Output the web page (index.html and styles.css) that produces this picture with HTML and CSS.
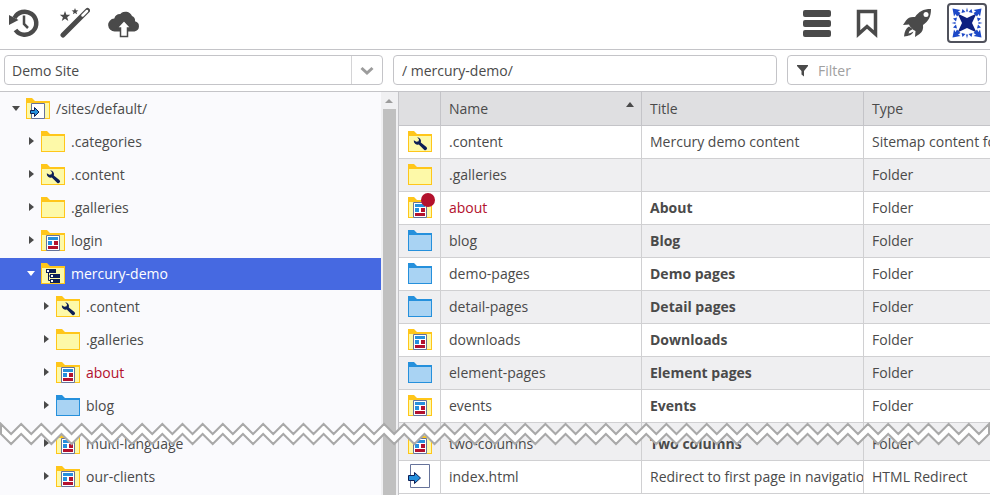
FILE: index.html
```html
<!DOCTYPE html>
<html lang="en">
<head>
    <meta charset="UTF-8">
    <meta name="viewport" content="width=device-width, initial-scale=1.0">
    <title>Explorer</title>
    <link rel="stylesheet" href="styles.css">
</head>
<body>

    <!-- shared icons -->
    <svg class="sprite" aria-hidden="true">
        <g id="base">
            <path d="M0 0h6l3 3h15v18H0z" fill="#ffc61a"/>
            <path d="M1 5h22v15H1z" fill="#fdf9a8"/>
        </g>
        <symbol id="folder" viewBox="0 -1 24 22">
            <use href="#base"/>
        </symbol>
        <symbol id="folder-blue" viewBox="0 -1 24 22">
            <path d="M0 0h6l3 3h15v18H0z" fill="#2590dc"/>
            <path d="M1 5h22v15H1z" fill="#a9d3f3"/>
        </symbol>
        <symbol id="folder-config" viewBox="0 -1 24 22">
            <use href="#base"/>
            <path d="M9.200 6.200a4 4 0 0 1 3.600 5.300l5.600 4.600a1.700 1.700 0 0 1-2.300 2.700l-5.300-5.200a4 4 0 0 1-5-4.400l2.500 1.600 2.300-.500.400-2z" fill="#0d1f56"/>
        </symbol>
        <symbol id="folder-nav" viewBox="0 -1 24 22">
            <use href="#base"/>
            <path d="M5.500 5.500h13v15h-13z" fill="#fff" stroke="#66739a"/>
            <path d="M7 7h10v3H7zM7 11h4v4H7z" fill="#2590dc"/>
            <path d="M13 11h4v4h-4zM7 16h10v3H7z" fill="#b3112d"/>
        </symbol>
        <symbol id="folder-redirect" viewBox="0 -1 24 22">
            <use href="#base"/>
            <path d="M5.500 5.500h13v15h-13z" fill="#fff" stroke="#66739a"/>
            <path d="M4.500 12.500h4v-3l4.500 4.500-4.500 4.500v-3h-4z" fill="#2590dc" stroke="#0d1f56"/>
        </symbol>
        <symbol id="folder-sitemap" viewBox="0 -1 24 22">
            <use href="#base"/>
            <path d="M7.500 9v8.500H10M7.500 13H10" fill="none" stroke="#0d1f56"/>
            <path d="M5 6h10v4H5zM9 11h10v4H9zM9 16h10v4H9z" fill="#0d1f56"/>
            <path d="M6 7h2v2H6zM10 12h2v2h-2zM10 17h2v2h-2z" fill="#fff"/>
        </symbol>
        <symbol id="file-redirect" viewBox="0 0 24 24">
            <path d="M2.500.500h19v23h-19z" fill="#fff" stroke="#66739a"/>
            <path d="M.500 11.500h6v-3l6 5.500-6 5.500v-3h-6z" fill="#2590dc" stroke="#0d1f56"/>
        </symbol>
    </svg>

    <header class="toolbar">
        <button class="tool" aria-label="History">
            <svg width="32" height="32" viewBox="0 0 32 32">
                <path d="M6.500 11A11.500 11.500 0 1 1 7.500 23" fill="none" stroke="#4a4a4a" stroke-width="4.500"/>
                <path d="M1 8v10l9.500-5z" fill="#4a4a4a"/>
                <path d="M16 8.500V17l4 4" fill="none" stroke="#4a4a4a" stroke-width="2.500"/>
            </svg>
        </button>
        <button class="tool" aria-label="Publish wand">
            <svg width="32" height="32" viewBox="0 0 32 32">
                <path d="M5 28L29.500 3.500" fill="none" stroke="#4a4a4a" stroke-width="5" stroke-linecap="round"/>
                <path d="M24.500 8.500l4.500-4.500" stroke="#fff" stroke-width="2.500" stroke-linecap="round"/>
                <path d="M7 4l1.400 3.700 3.900.100-3.100 2.400 1.100 3.800L7 11.800 3.800 14l1.100-3.800-3.100-2.400 3.900-.100zM17 1l.900 2.300 2.500.100-2 1.500.7 2.400L17 5.900l-2.100 1.400.7-2.400-2-1.500 2.500-.1z" fill="#4a4a4a"/>
            </svg>
        </button>
        <button class="tool" aria-label="Upload">
            <svg width="32" height="32" viewBox="0 0 32 32">
                <path d="M7 24.500a6.500 6.500 0 0 1-.700-13 6 6 0 0 1 6-4.500A7 7 0 0 1 24 9a5 5 0 0 1 3 5.300A5.200 5.200 0 0 1 26.500 24.500z" fill="#4a4a4a"/>
                <path d="M16 13.500l7 7.500h-3.500v8.500h-7V21H9z" fill="#fff" stroke="#4a4a4a" stroke-width="1.500"/>
            </svg>
        </button>
        <span class="spacer"></span>
        <button class="tool" aria-label="Menu">
            <svg width="32" height="32" viewBox="0 0 32 32" fill="#4a4a4a">
                <rect x="2" y="3" width="28" height="7" rx="2"/>
                <rect x="2" y="13" width="28" height="7" rx="2"/>
                <rect x="2" y="23" width="28" height="7" rx="2"/>
            </svg>
        </button>
        <button class="tool" aria-label="Bookmark">
            <svg width="32" height="32" viewBox="0 0 32 32">
                <path d="M7.500 4.500h17V27L16 19.500 7.500 27z" fill="none" stroke="#4a4a4a" stroke-width="3.500"/>
            </svg>
        </button>
        <button class="tool" aria-label="Launchpad">
            <svg width="32" height="32" viewBox="0 0 32 32">
                <path d="M30 2c-8 0-12 2.500-16 8-4-.5-7 .500-9 3.500L2 18l6-.500 1 2 3.500 3.500 2 1-.500 6 4.500-3c3-2 4-5 3.500-9 5.500-4 8-8 8-16z" fill="#4a4a4a"/>
                <circle cx="25" cy="7.500" r="2.500" fill="#fff"/>
                <path d="M8 19.500c-3 1.500-4.500 5-5 10 5-.5 8-1.500 9.500-5l-3 1.500-2 .500 1-2.500 3.500-2z" fill="#4a4a4a"/>
            </svg>
        </button>
        <button class="avatar" aria-label="User">
            <svg width="32" height="32" viewBox="0 0 32 32">
                <path d="M6.500 6.500L16 11l9.500-4.500L21 16l4.500 9.500L16 21l-9.500 4.500L11 16z" fill="#0d2080"/>
                <g id="ray" fill="#1c48c8">
                    <path d="M1.500 1.500l8 1.500L7 4.500l2.500 1.500L6 9.500 4.500 7 3 9.500z"/>
                    <path d="M10.500 6l1-4 3 3zM15 4.500L16 .500l1 4zM17.500 5l3-3 1 4z"/>
                </g>
                <use href="#ray" transform="rotate(90 16 16)"/>
                <use href="#ray" transform="rotate(180 16 16)"/>
                <use href="#ray" transform="rotate(270 16 16)"/>
            </svg>
        </button>
    </header>

    <div class="filters">
        <div class="site">
            <select class="field" aria-label="Site">
                <option>Demo Site</option>
            </select>
            <svg class="chevron" width="31" height="28" viewBox="0 0 31 28">
                <path d="M.500 0v28" stroke="#d4d4d6"/>
                <path d="M10.500 12l5.500 5 5.500-5" fill="none" stroke="#9c9c9c" stroke-width="3"/>
            </svg>
        </div>
        <input class="field path" type="text" aria-label="Path" value="/ mercury-demo/">
        <div class="search">
            <svg class="funnel" width="14" height="12" viewBox="0 0 14 12"><path d="M1 0h11v1L8 6v5.500L5.500 9.500V6L1 1z" fill="#4a4a4a"/></svg>
            <input class="field" type="text" aria-label="Filter" placeholder="Filter">
        </div>
    </div>

    <main class="explorer">
        <nav class="tree">
            <ul class="nodes">
                <li class="node open"><button class="toggle" aria-label="Toggle"></button><svg class="icon"><use href="#folder-redirect"/></svg><a href="#">/sites/default/</a></li>
                <li class="node level1"><button class="toggle" aria-label="Toggle"></button><svg class="icon"><use href="#folder"/></svg><a href="#">.categories</a></li>
                <li class="node level1"><button class="toggle" aria-label="Toggle"></button><svg class="icon"><use href="#folder-config"/></svg><a href="#">.content</a></li>
                <li class="node level1"><button class="toggle" aria-label="Toggle"></button><svg class="icon"><use href="#folder"/></svg><a href="#">.galleries</a></li>
                <li class="node level1"><button class="toggle" aria-label="Toggle"></button><svg class="icon"><use href="#folder-nav"/></svg><a href="#">login</a></li>
                <li class="node level1 open selected"><button class="toggle" aria-label="Toggle"></button><svg class="icon"><use href="#folder-sitemap"/></svg><a href="#">mercury-demo</a></li>
                <li class="node level2"><button class="toggle" aria-label="Toggle"></button><svg class="icon"><use href="#folder-config"/></svg><a href="#">.content</a></li>
                <li class="node level2"><button class="toggle" aria-label="Toggle"></button><svg class="icon"><use href="#folder"/></svg><a href="#">.galleries</a></li>
                <li class="node level2 changed"><button class="toggle" aria-label="Toggle"></button><svg class="icon"><use href="#folder-nav"/></svg><a href="#">about</a></li>
                <li class="node level2"><button class="toggle" aria-label="Toggle"></button><svg class="icon"><use href="#folder-blue"/></svg><a href="#">blog</a></li>
                <li class="node level2 after-tear"><button class="toggle" aria-label="Toggle"></button><svg class="icon"><use href="#folder-nav"/></svg><a href="#">multi-language</a></li>
                <li class="node level2"><button class="toggle" aria-label="Toggle"></button><svg class="icon"><use href="#folder-nav"/></svg><a href="#">our-clients</a></li>
            </ul>
            <div class="scrollbar">
                <span class="scroll-up"></span>
                <span class="thumb"></span>
            </div>
        </nav>

        <div class="list">
            <table class="files">
                <colgroup>
                    <col class="col-icon">
                    <col class="col-name">
                    <col class="col-title">
                    <col>
                </colgroup>
                <thead>
                    <tr><th></th><th><span class="sorted">Name</span></th><th>Title</th><th>Type</th></tr>
                </thead>
                <tbody>
                    <tr><td><svg class="icon"><use href="#folder-config"/></svg></td><td>.content</td><td>Mercury demo content</td><td>Sitemap content folder</td></tr>
                    <tr><td><svg class="icon"><use href="#folder"/></svg></td><td>.galleries</td><td></td><td>Folder</td></tr>
                    <tr><td><span class="badged"><svg class="icon"><use href="#folder-nav"/></svg></span></td><td class="changed">about</td><td><b>About</b></td><td>Folder</td></tr>
                    <tr><td><svg class="icon"><use href="#folder-blue"/></svg></td><td>blog</td><td><b>Blog</b></td><td>Folder</td></tr>
                    <tr><td><svg class="icon"><use href="#folder-blue"/></svg></td><td>demo-pages</td><td><b>Demo pages</b></td><td>Folder</td></tr>
                    <tr><td><svg class="icon"><use href="#folder-blue"/></svg></td><td>detail-pages</td><td><b>Detail pages</b></td><td>Folder</td></tr>
                    <tr><td><svg class="icon"><use href="#folder-nav"/></svg></td><td>downloads</td><td><b>Downloads</b></td><td>Folder</td></tr>
                    <tr><td><svg class="icon"><use href="#folder-blue"/></svg></td><td>element-pages</td><td><b>Element pages</b></td><td>Folder</td></tr>
                    <tr><td><svg class="icon"><use href="#folder-nav"/></svg></td><td>events</td><td><b>Events</b></td><td>Folder</td></tr>
                    <tr class="after-tear"><td><svg class="icon"><use href="#folder-nav"/></svg></td><td>two-columns</td><td><b>Two columns</b></td><td>Folder</td></tr>
                    <tr><td><svg class="icon file"><use href="#file-redirect"/></svg></td><td>index.html</td><td>Redirect to first page in navigation</td><td>HTML Redirect</td></tr>
                </tbody>
            </table>
        </div>

        <!-- tear line across both panes -->
        <svg class="tear" viewBox="0 0 982 24" preserveAspectRatio="none" aria-hidden="true">
            <path vector-effect="non-scaling-stroke" fill="#fff" stroke="#a9a9a9" stroke-width="2" d="M1 2l
                10 10 10-10 10 10 10-10 10 10 10-10 10 10 10-10 10 10 10-10 10 10 10-10 10 10 10-10
                10 10 10-10 10 10 10-10 10 10 10-10 10 10 10-10 10 10 10-10 10 10 10-10 10 10 10-10
                10 10 10-10 10 10 10-10 10 10 10-10 10 10 10-10 10 10 10-10 10 10 10-10 10 10 10-10
                10 10 10-10 10 10 10-10 10 10 10-10 10 10 10-10 10 10 10-10 10 10 10-10 10 10 10-10
                10 10 10-10 10 10 10-10 10 10 10-10 10 10 10-10 10 10 10-10 10 10 10-10 10 10 10-10
                10 10 10-10 10 10 10-10 10 10 10-10 10 10 10-10 10 10 10-10 10 10 10-10 10 10 10-10
                10 10 10-10 10 10 10-10 10 10 10-10 10 10 10-10 10 10 10-10 10 10 10-10 10 10 10-10
                v10l
                -10 10-10-10-10 10-10-10-10 10-10-10-10 10-10-10-10 10-10-10-10 10-10-10-10 10-10-10
                -10 10-10-10-10 10-10-10-10 10-10-10-10 10-10-10-10 10-10-10-10 10-10-10-10 10-10-10
                -10 10-10-10-10 10-10-10-10 10-10-10-10 10-10-10-10 10-10-10-10 10-10-10-10 10-10-10
                -10 10-10-10-10 10-10-10-10 10-10-10-10 10-10-10-10 10-10-10-10 10-10-10-10 10-10-10
                -10 10-10-10-10 10-10-10-10 10-10-10-10 10-10-10-10 10-10-10-10 10-10-10-10 10-10-10
                -10 10-10-10-10 10-10-10-10 10-10-10-10 10-10-10-10 10-10-10-10 10-10-10-10 10-10-10
                -10 10-10-10-10 10-10-10-10 10-10-10-10 10-10-10-10 10-10-10-10 10-10-10-10 10-10-10z"/>
        </svg>
    </main>

</body>
</html>
```

FILE: styles.css
```css
* {
    box-sizing: border-box;
}

body {
    margin: 0;
    height: 100vh;
    display: flex;
    flex-direction: column;
    overflow: hidden;
    font-family: "Open Sans", sans-serif;
    font-size: 14px;
    color: #4a4a4a;
    background-color: #fff;
}

button {
    padding: 0;
    border: 0;
    background: none;
}

a {
    color: inherit;
    text-decoration: none;
}

.sprite {
    position: absolute;
    width: 0;
    height: 0;
}

.toolbar {
    display: flex;
    align-items: center;
    gap: 18px;
    height: 50px;
    padding: 0 3px 4px 8px;
    border-bottom: 1px solid #c4c4c8;
    flex: none;
}

.tool,
.tool svg,
.avatar svg {
    display: block;
}

.spacer {
    flex: 1;
}

.avatar {
    display: flex;
    align-items: center;
    justify-content: center;
    width: 40px;
    height: 40px;
    margin-left: -4px;
    border: 2px solid #50525c;
    border-radius: 4px;
}

.filters {
    display: flex;
    gap: 10px;
    padding: 5px 3px 6px 4px;
    border-bottom: 1px solid #c4c4c8;
    flex: none;
}

.field {
    display: block;
    width: 100%;
    height: 30px;
    padding: 0 8px;
    border: 1px solid #c4c4c8;
    border-radius: 4px;
    background-color: #fff;
    font: inherit;
    color: #4a4a4a;
}

.field::placeholder {
    color: #a0a0a0;
}

.site {
    position: relative;
    flex: none;
    width: 379px;
}

.site .field {
    appearance: none;
    padding: 0 7px;
}

.chevron {
    position: absolute;
    top: 1px;
    right: 1px;
    pointer-events: none;
}

.path {
    flex: 1;
    min-width: 0;
}

.search {
    position: relative;
    flex: none;
    width: 200px;
}

.search .field {
    padding-left: 30px;
}

.funnel {
    position: absolute;
    top: 10px;
    left: 9px;
}

.explorer {
    position: relative;
    display: flex;
    flex: 1;
    min-height: 0;
    overflow: hidden;
}

.tree {
    display: flex;
    flex: none;
    width: 399px;
    border-right: 1px solid #c4c4c8;
    background-color: #fafafd;
}

.nodes {
    flex: 1;
    margin: 0;
    padding: 1px 0 0;
    list-style: none;
}

.node {
    display: flex;
    align-items: center;
    height: 32px;
    margin-bottom: 1px;
    padding: 0 0 2px 10px;
}

.node a {
    margin-left: 6px;
}

.level1 {
    padding-left: 25px;
}

.level2 {
    padding-left: 40px;
}

.node.after-tear {
    margin-top: 6px;
}

.selected {
    background-color: #4669e1;
    color: #fff;
}

.toggle {
    display: flex;
    justify-content: center;
    width: 12px;
    margin-right: 4px;
}

.toggle::before {
    content: "";
    border: 4px solid transparent;
    border-left: 5px solid #4a4a4a;
    border-right: 0;
}

.open .toggle::before {
    border: 4px solid transparent;
    border-top: 5px solid #4a4a4a;
    border-bottom: 0;
}

.selected .toggle::before {
    border-top-color: #fff;
}

.icon {
    display: block;
    flex: none;
    width: 24px;
    height: 22px;
}

.icon.file {
    height: 24px;
}

.node.changed,
.files .changed {
    color: #b3112d;
}

.scrollbar {
    display: flex;
    flex-direction: column;
    align-items: center;
    width: 17px;
    padding-right: 1px;
    background-color: #f0f0f2;
}

.scroll-up {
    margin: 7px 0 6px;
    border: 4px solid transparent;
    border-top: 0;
    border-bottom: 4px solid #9c9c9c;
}

.thumb {
    flex: 1;
    width: 13px;
    background-color: #c0c0c0;
}

.list {
    flex: 1;
    min-width: 0;
    overflow: hidden;
}

.files {
    width: 100%;
    table-layout: fixed;
    border-collapse: separate;
    border-spacing: 0;
}

.col-icon {
    width: 42px;
}

.col-name {
    width: 201px;
}

.col-title {
    width: 222px;
}

.files th,
.files td {
    height: 33px;
    padding: 0 0 2px 8px;
    border-right: 1px solid #d0d0d2;
    border-bottom: 1px solid #d0d0d2;
    font-weight: normal;
    text-align: left;
    white-space: nowrap;
    overflow: hidden;
}

.files th {
    height: 34px;
    padding-bottom: 0;
    border-color: #c4c4c8;
    background-color: #dfdfe1;
}

.files td:first-child {
    padding-left: 9px;
}

.files th:last-child,
.files td:last-child {
    border-right: 0;
}

.files tbody tr:nth-child(even) {
    background-color: #efeff1;
}

.files .after-tear td {
    height: 38px;
    padding-top: 5px;
}

.files b {
    font-weight: bold;
}

.sorted {
    display: flex;
    justify-content: space-between;
    align-items: center;
    padding-right: 7px;
}

.sorted::after {
    content: "";
    margin-bottom: 8px;
    border: 4px solid transparent;
    border-top: 0;
    border-bottom: 5px solid #4a4a4a;
}

.badged {
    position: relative;
    display: block;
    width: 24px;
}

.badged::after {
    content: "";
    position: absolute;
    top: -3px;
    right: -3px;
    width: 14px;
    height: 14px;
    border-radius: 50%;
    background-color: #b3112d;
}

.tear {
    position: absolute;
    top: 330px;
    left: 0;
    width: 100%;
    height: 24px;
}
```
